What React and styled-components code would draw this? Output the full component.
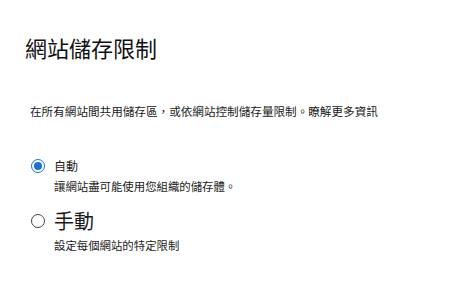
import styled, { createGlobalStyle } from "styled-components";

const Global = createGlobalStyle`
  body {
    margin: 0;
    background: #ffffff;
    font-family: "Noto Sans CJK TC", "Noto Sans", sans-serif;
    color: #1b1b1b;
  }
`;

const Page = styled.div`
  width: 474px;
  height: 288px;
  padding: 33px 0 0 25px;
  box-sizing: border-box;
`;

const Title = styled.h1`
  margin: 0;
  font-size: 22px;
  font-weight: 400;
  line-height: 28px;
  color: #111;
`;

const Lead = styled.p`
  margin: 41px 0 0 5px;
  font-size: 11.6px;
  line-height: 18px;
`;

const Options = styled.div`
  display: flex;
  flex-direction: column;
  margin: 37px 0 0 6px;
`;

const Option = styled.label`
  display: grid;
  grid-template-columns: 14px 1fr;
  column-gap: 9px;
  align-items: center;
  margin-bottom: ${(p) => p.$gap || 0}px;
`;

const Radio = styled.span`
  width: 14px;
  height: 14px;
  border-radius: 50%;
  box-sizing: border-box;
  border: 1px solid ${(p) => (p.$on ? "#1a73d4" : "#444")};
  display: flex;
  align-items: center;
  justify-content: center;
  &::after {
    content: "";
    width: 8px;
    height: 8px;
    border-radius: 50%;
    background: #1a73d4;
    display: ${(p) => (p.$on ? "block" : "none")};
  }
`;

const Label = styled.span`
  font-size: ${(p) => p.$size}px;
  line-height: ${(p) => p.$size + 6}px;
`;

const Hint = styled.span`
  grid-column: 2;
  font-size: 11.4px;
  line-height: 18px;
  margin-top: ${(p) => p.$top}px;
`;

export default function App() {
  return (
    <>
      <Global />
      <Page>
        <Title>網站儲存限制</Title>
        <Lead>在所有網站間共用儲存區，或依網站控制儲存量限制。瞭解更多資訊</Lead>
        <Options>
          <Option $gap={13}>
            <Radio $on />
            <Label $size={12}>自動</Label>
            <Hint $top={2}>讓網站盡可能使用您組織的儲存體。</Hint>
          </Option>
          <Option>
            <Radio />
            <Label $size={20}>手動</Label>
            <Hint $top={2}>設定每個網站的特定限制</Hint>
          </Option>
        </Options>
      </Page>
    </>
  );
}
